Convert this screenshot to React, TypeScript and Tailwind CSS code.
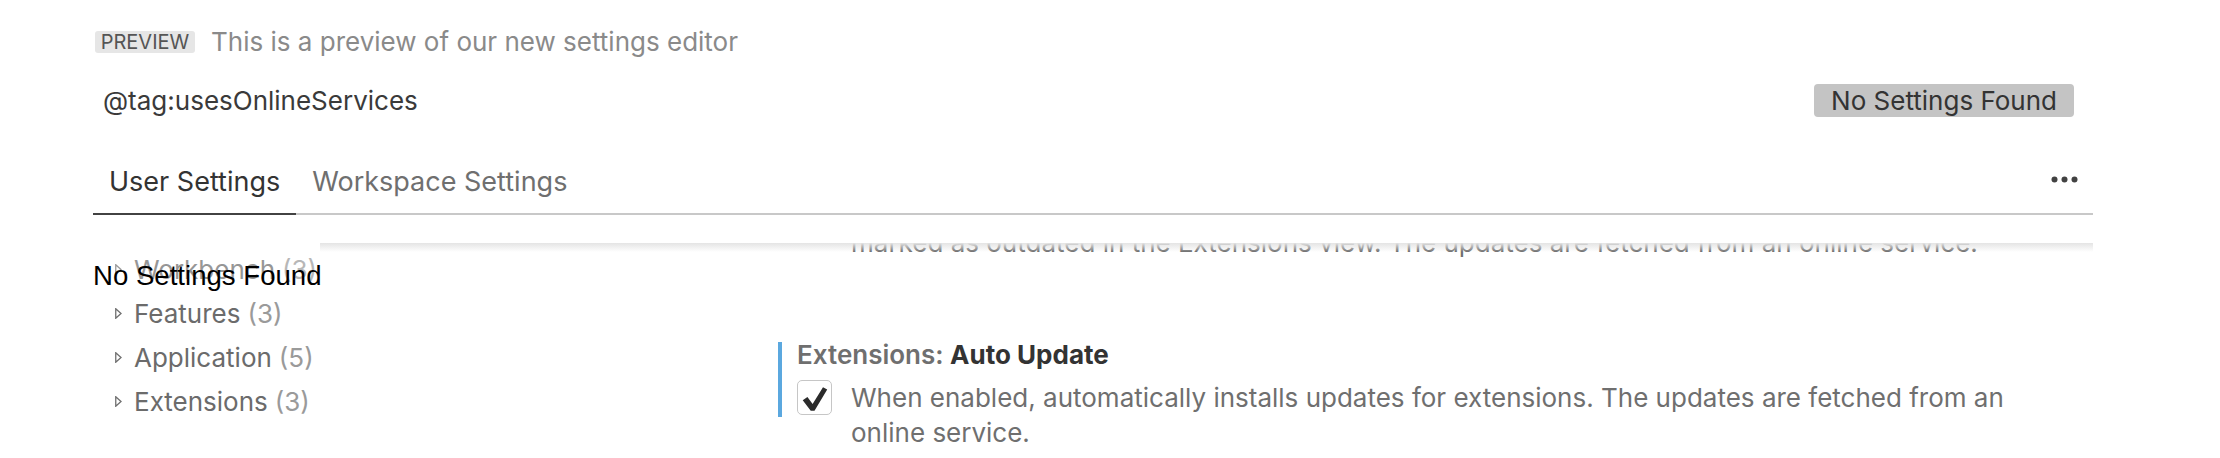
import React from "react";

const groups = [
  { label: "Workbench", count: 3, faded: true },
  { label: "Features", count: 3 },
  { label: "Application", count: 5 },
  { label: "Extensions", count: 3 },
];

function Caret() {
  return (
    <svg width="7" height="11" viewBox="0 0 7 11" className="shrink-0">
      <polygon points="0.75,0.75 6,5.5 0.75,10.25" fill="none" stroke="#6f6f6f" strokeWidth="1.3" />
    </svg>
  );
}

function Dots() {
  return (
    <svg width="27" height="7" viewBox="0 0 27 7">
      <circle cx="3.5" cy="3.5" r="3" fill="#424242" />
      <circle cx="13.5" cy="3.5" r="3" fill="#424242" />
      <circle cx="23.5" cy="3.5" r="3" fill="#424242" />
    </svg>
  );
}

function Check() {
  return (
    <svg width="35" height="35" viewBox="0 0 35 35">
      <polygon points="5,20.5 10,17 15.5,24.5 26.5,6.5 31,9 17.5,31.5 13.5,31.5" fill="#2b2b2b" />
    </svg>
  );
}

export default function App() {
  return (
    <div className="h-[458px] w-full overflow-hidden bg-white font-['Inter',sans-serif] text-[26px]">
      <div className="ml-[93px] w-[2000px]">
        {/* preview banner */}
        <div className="flex h-[21px] items-center mt-[31px]">
          <span className="ml-[2px] flex h-[22px] w-[100px] items-center justify-center rounded-[3px] bg-[#e6e6e6] text-[20px] leading-none text-[#555]">
            PREVIEW
          </span>
          <span className="ml-[16px] text-[#8a8a8a] leading-none">This is a preview of our new settings editor</span>
        </div>

        {/* search row */}
        <div className="mt-[32px] flex h-[33px] items-center justify-between">
          <span className="pl-[10px] text-[#3a3a3a] leading-none">@tag:usesOnlineServices</span>
          <span className="mr-[19px] flex h-[33px] items-center rounded-[4px] bg-[#c4c4c4] px-[17px] leading-none text-[#333]">
            No Settings Found
          </span>
        </div>

        {/* tabs */}
        <div className="mt-[34px] flex h-[64px] items-stretch border-b-2 border-[#c8c8c8] text-[27px]">
          <div className="-mb-[2px] flex items-center border-b-2 border-[#424242] px-[16px] text-[#333]">User Settings</div>
          <div className="flex items-center px-[16px] text-[#6f6f6f]">Workspace Settings</div>
          <div className="ml-auto mr-[15px] flex items-center pb-[6px]">
            <Dots />
          </div>
        </div>

        {/* body */}
        <div className="flex">
          <div className="relative w-[227px] shrink-0 pt-[32px]">
            {groups.map((g) => (
              <div key={g.label} className={`flex h-[44px] items-center ${g.faded ? "opacity-70" : ""}`}>
                <span className="ml-[22px]">
                  <Caret />
                </span>
                <span className="ml-[12px] text-[#6b6b6b]">{g.label}</span>
                <span className="ml-[7px] text-[#9a9a9a]">({g.count})</span>
              </div>
            ))}
            <div className="absolute left-0 top-[40px] z-10 whitespace-nowrap font-['Liberation_Sans',Arial,sans-serif] text-[27.6px] text-black">
              No Settings Found
            </div>
          </div>

          <div className="relative mt-[28px] h-[215px] flex-1 overflow-hidden">
            <div className="pointer-events-none absolute inset-x-0 top-0 z-10 h-[9px] bg-gradient-to-b from-[#e4e4e4] to-transparent" />
            <div className="-mt-[18px] pl-[458px]">
              <div className="pl-[73px] leading-[35px] text-[#6f6f6f] whitespace-nowrap">
                marked as outdated in the Extensions view. The updates are fetched from an online service.
              </div>

              <div className="relative mt-[82px] pl-[19px]">
                <div className="absolute left-0 top-0 h-[75px] w-[4px] bg-[#5ba8df]" />
                <div className="leading-[26px] font-semibold">
                  <span className="text-[#6f6f6f]">Extensions: </span>
                  <span className="font-bold text-[#333]">Auto Update</span>
                </div>
                <div className="mt-[12px] flex items-start gap-[19px]">
                  <div className="flex h-[35px] w-[35px] shrink-0 items-center justify-center rounded-[5px] border-[1.5px] border-[#c6c6c6]">
                    <Check />
                  </div>
                  <div className="w-[1190px] leading-[35px] text-[#6f6f6f]">
                    When enabled, automatically installs updates for extensions. The updates are fetched from an online service.
                  </div>
                </div>
              </div>
            </div>
          </div>
        </div>
      </div>
    </div>
  );
}
